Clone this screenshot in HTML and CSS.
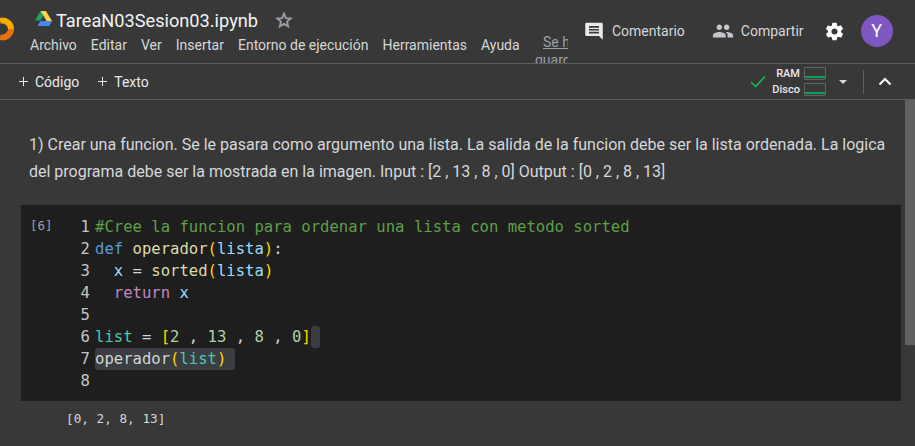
FILE: index.html
```html
<!DOCTYPE html>
<html lang="en">
<head>
<meta charset="UTF-8" />
<meta name="viewport" content="width=device-width, initial-scale=1" />
<title>TareaN03Sesion03.ipynb</title>
<link rel="stylesheet" href="styles.css">
</head>
<body>

<header class="header">
  <svg class="logo" width="15" height="24" viewBox="0 0 15 24">
    <path d="M0 4 A8.5 8.5 0 0 1 11 12" fill="none" stroke="#f9ab00" stroke-width="6"/>
    <path d="M11 12 A8.5 8.5 0 0 1 0 20" fill="none" stroke="#e8710a" stroke-width="6"/>
  </svg>
  <div class="title-block">
    <div class="title-row">
      <svg class="drive" width="17" height="15" viewBox="0 0 17 15">
        <path d="M5.7 0 H11 L5.4 9.6 H0 Z" fill="#1fa463"/>
        <path d="M5.7 0 H11 L17 10 H11.6 Z" fill="#ffd04b"/>
        <path d="M5.4 10 H17 L14.2 15 H2.6 Z" fill="#4687f4"/>
      </svg>
      <span class="title">TareaN03Sesion03.ipynb</span>
      <svg class="star" width="18" height="18" viewBox="0 0 24 24">
        <path d="M12 3.5 L14.5 9.4 L21 10 L16.1 14.2 L17.6 20.5 L12 17.2 L6.4 20.5 L7.9 14.2 L3 10 L9.5 9.4 Z" fill="none" stroke="#9aa0a6" stroke-width="2.4"/>
      </svg>
    </div>
    <nav class="menu">
      <span>Archivo</span>
      <span>Editar</span>
      <span>Ver</span>
      <span>Insertar</span>
      <span>Entorno de ejecución</span>
      <span>Herramientas</span>
      <span>Ayuda</span>
    </nav>
  </div>
  <div class="saved">
    <span class="saved-first">Se ha</span>
    <span class="saved-second">guardado</span>
  </div>
  <div class="actions">
    <div class="action action-comment">
      <svg width="20" height="20" viewBox="0 0 24 24">
        <path d="M3 2 H21 a1.5 1.5 0 0 1 1.5 1.5 V22.5 L18 18 H3 a1.5 1.5 0 0 1 -1.5 -1.5 V3.5 A1.5 1.5 0 0 1 3 2 Z M6 6 V8 H18 V6 Z M6 9.5 V11.5 H18 V9.5 Z M6 13 V15 H18 V13 Z" fill="#e8eaed" fill-rule="evenodd"/>
      </svg>
      <span>Comentario</span>
    </div>
    <div class="action action-share">
      <svg width="22" height="22" viewBox="0 0 24 24">
        <path d="M16 11c1.66 0 2.99-1.34 2.99-3S17.66 5 16 5s-3 1.34-3 3 1.34 3 3 3zm-8 0c1.66 0 2.99-1.34 2.99-3S9.66 5 8 5 5 6.34 5 8s1.34 3 3 3zm0 2c-2.33 0-7 1.17-7 3.5V19h14v-2.5C15 14.17 10.33 13 8 13zm8 0c-.29 0-.62.02-.97.05 1.16.84 1.97 1.97 1.97 3.45V19h6v-2.5c0-2.33-4.67-3.5-7-3.5z" fill="#c4c7cc"/>
      </svg>
      <span>Compartir</span>
    </div>
    <svg class="gear" width="21" height="21" viewBox="0 0 24 24">
      <path d="M19.43 12.98c.04-.32.07-.64.07-.98s-.03-.66-.07-.98l2.11-1.65c.19-.15.24-.42.12-.64l-2-3.46c-.12-.22-.39-.3-.61-.22l-2.49 1c-.52-.4-1.08-.73-1.69-.98l-.38-2.65C14.46 2.18 14.25 2 14 2h-4c-.25 0-.46.18-.49.42l-.38 2.65c-.61.25-1.17.59-1.69.98l-2.49-1c-.23-.09-.49 0-.61.22l-2 3.46c-.13.22-.07.49.12.64l2.11 1.65c-.04.32-.07.65-.07.98s.03.66.07.98l-2.11 1.65c-.19.15-.24.42-.12.64l2 3.46c.12.22.39.3.61.22l2.49-1c.52.4 1.08.73 1.69.98l.38 2.65c.03.24.24.42.49.42h4c.25 0 .46-.18.49-.42l.38-2.65c.61-.25 1.17-.59 1.69-.98l2.49 1c.23.09.49 0 .61-.22l2-3.46c.12-.22.07-.49-.12-.64l-2.11-1.65zM12 15.5c-1.93 0-3.5-1.57-3.5-3.5s1.57-3.5 3.5-3.5 3.5 1.57 3.5 3.5-1.57 3.5-3.5 3.5z" fill="#fff"/>
    </svg>
    <div class="avatar">Y</div>
  </div>
</header>

<div class="toolbar">
  <div class="add-btn"><span class="plus"></span>Código</div>
  <div class="add-btn"><span class="plus"></span>Texto</div>
  <div class="toolbar-right">
    <svg class="check" width="16" height="13" viewBox="0 0 17 14">
      <path d="M1 7.5 L6 12.5 L16 1.5" fill="none" stroke="#12b753" stroke-width="1.7"/>
    </svg>
    <div class="resources">
      <div class="resource"><span>RAM</span><span class="meter"><span class="meter-fill"></span></span></div>
      <div class="resource"><span>Disco</span><span class="meter"><span class="meter-fill"></span></span></div>
    </div>
    <span class="caret"></span>
    <span class="divider"></span>
    <svg class="chevron" width="14" height="9" viewBox="0 0 14 9">
      <path d="M1.5 7.5 L7 2 L12.5 7.5" fill="none" stroke="#fff" stroke-width="2"/>
    </svg>
  </div>
</div>

<div class="main">
  <div class="notebook">
    <p class="markdown">1) Crear una funcion. Se le pasara como argumento una lista. La salida de la funcion debe ser la lista ordenada. La logica del programa debe ser la mostrada en la imagen. Input : [2 , 13 , 8 , 0] Output : [0 , 2 , 8 , 13]</p>

    <div class="cell">
      <div class="exec-count">[6]</div>
      <div class="gutter">
        <div>1</div><div>2</div><div>3</div><div>4</div><div>5</div><div>6</div><div>7</div><div>8</div>
      </div>
      <div class="code">
        <div class="line"><span class="c">#Cree la funcion para ordenar una lista con metodo sorted</span></div>
        <div class="line"><span class="k">def</span> <span class="f">operador</span><span class="b">(</span><span class="v">lista</span><span class="b">)</span>:</div>
        <div class="line">  <span class="v">x</span> = <span class="f">sorted</span><span class="b">(</span><span class="v">lista</span><span class="b">)</span></div>
        <div class="line">  <span class="r">return</span> <span class="v">x</span></div>
        <div class="line"></div>
        <div class="line"><span class="t">list</span> = <span class="b">[</span><span class="n">2</span> , <span class="n">13</span> , <span class="n">8</span> , <span class="n">0</span><span class="b">]</span><span class="cursor"></span></div>
        <div class="line"><span class="selected">operador<span class="b">(</span><span class="t">list</span><span class="b">)</span></span></div>
        <div class="line"></div>
      </div>
    </div>

    <pre class="output">[0, 2, 8, 13]</pre>
  </div>
  <div class="scrollbar"><div class="thumb"></div></div>
</div>

</body>
</html>
```

FILE: styles.css
```css
html, body {
  margin: 0;
  padding: 0;
  height: 100%;
  overflow: hidden;
  background: #383838;
  color: #e8eaed;
  font-family: Roboto, Arial, sans-serif;
}

/* header */
.header {
  display: flex;
  height: 63px;
  border-bottom: 1px solid #5f5f5f;
  overflow: hidden;
}
.logo {
  flex: none;
  margin-top: 17px;
}
.title-block {
  margin-left: 15px;
  width: 490px;
}
.title-row {
  display: flex;
  align-items: center;
  margin-left: 5px;
  height: 40px;
}
.drive {
  margin-top: -3px;
}
.title {
  margin-left: 4px;
  font-size: 18.2px;
  color: #f1f3f4;
}
.star {
  margin-left: 17px;
}
.menu {
  display: flex;
  gap: 14px;
  margin-top: -3px;
  font-size: 14px;
  color: #d5d7da;
}
.saved {
  flex: none;
  width: 33px;
  margin-top: 33px;
  margin-left: 15px;
  overflow: hidden;
  font-size: 14px;
  line-height: 18px;
  color: #9aa0a6;
  white-space: nowrap;
}
.saved span {
  display: block;
}
.saved-first {
  margin-left: 8px;
  text-decoration: underline;
}
.actions {
  display: flex;
  align-items: center;
  height: 62px;
  margin-left: 16px;
  font-size: 14px;
  color: #d5d7da;
}
.action {
  display: flex;
  align-items: center;
  gap: 8px;
}
.action-share {
  margin-left: 27px;
  gap: 7px;
}
.gear {
  margin-left: 20px;
}
.avatar {
  width: 32px;
  height: 32px;
  margin-left: 16px;
  border-radius: 50%;
  background: #7e57c2;
  color: #fff;
  font-size: 18px;
  line-height: 32px;
  text-align: center;
}

/* toolbar */
.toolbar {
  display: flex;
  align-items: center;
  height: 35px;
  padding-left: 19px;
  border-bottom: 1px solid #5f5f5f;
  font-size: 14px;
  color: #e8eaed;
}
.add-btn {
  display: flex;
  align-items: center;
  margin-right: 19px;
}
.plus {
  width: 9px;
  height: 9px;
  margin-right: 7px;
  background:
    linear-gradient(#e8eaed, #e8eaed) center / 100% 1px no-repeat,
    linear-gradient(#e8eaed, #e8eaed) center / 1px 100% no-repeat;
}
.toolbar-right {
  display: flex;
  align-items: center;
  margin-left: auto;
  padding-right: 23px;
}
.check {
  margin-right: 6px;
}
.resources {
  font-size: 11px;
  font-weight: 500;
  text-align: right;
  color: #e8eaed;
}
.resource {
  display: flex;
  align-items: center;
  justify-content: flex-end;
  gap: 4px;
  height: 16px;
}
.meter {
  display: flex;
  flex-direction: column;
  justify-content: flex-end;
  width: 20px;
  height: 11px;
  border: 1px solid #5f6368;
  border-radius: 1px;
}
.meter-fill {
  display: block;
  height: 2px;
  margin-bottom: 1px;
  background: #0f9d58;
}
.caret {
  width: 0;
  height: 0;
  margin-left: 13px;
  border-left: 4px solid transparent;
  border-right: 4px solid transparent;
  border-top: 4px solid #d5d7da;
}
.divider {
  width: 1px;
  height: 24px;
  margin-left: 16px;
  background: #5f5f5f;
}
.chevron {
  margin-left: 14px;
}

/* notebook */
.main {
  display: flex;
  height: 347px;
}
.notebook {
  flex: 1;
  min-width: 0;
  padding-left: 21px;
  padding-right: 4px;
}
.markdown {
  margin: 31px 15px 0 8px;
  font-size: 16px;
  line-height: 27px;
  color: #d5d7da;
}
.cell {
  display: flex;
  width: 880px;
  height: 196px;
  margin-top: 20px;
  background: #1e1e1e;
  font-family: "DejaVu Sans Mono", monospace;
}
.exec-count {
  width: 44px;
  padding: 13px 0 0 9px;
  box-sizing: border-box;
  font-size: 12.5px;
  color: #9aa0a6;
}
.gutter {
  width: 25px;
  padding-top: 11px;
  font-size: 15.6px;
  line-height: 22px;
  text-align: right;
  color: #c6c6c6;
}
.code {
  margin-left: 5px;
  padding-top: 11px;
  font-size: 15.58px;
  line-height: 22px;
  color: #d4d4d4;
}
.line {
  height: 22px;
  white-space: pre;
}
.c { color: #5f9e4a; }
.k { color: #569cd6; }
.r { color: #c586c0; }
.f { color: #dcdcaa; }
.v { color: #9cdcfe; }
.t { color: #4ec9b0; }
.n { color: #b5cea8; }
.b { color: #ffd700; }
.selected {
  display: inline-block;
  width: 140px;
  height: 22px;
  border-radius: 3px;
  background: #3a3d41;
}
.cursor {
  display: inline-block;
  width: 9px;
  height: 22px;
  vertical-align: top;
  border-radius: 3px;
  background: #3a3d41;
}
.output {
  margin: 10px 0 0 45px;
  font-family: "DejaVu Sans Mono", monospace;
  font-size: 12.7px;
  color: #d5d7da;
}
.scrollbar {
  flex: none;
  width: 10px;
}
.thumb {
  height: 245px;
  background: #616161;
}
```
